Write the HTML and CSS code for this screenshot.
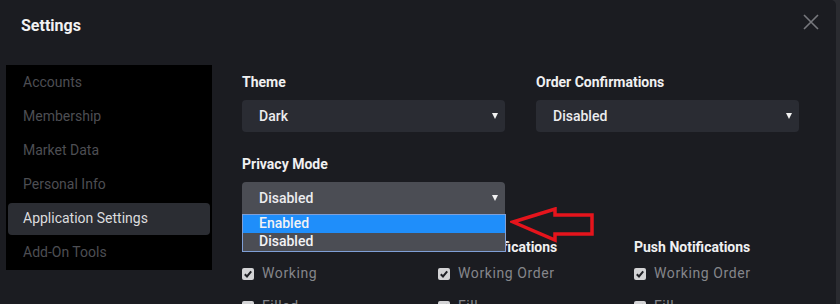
FILE: index.html
```html
<!DOCTYPE html>
<html>
<head>
<meta charset="utf-8">
<link rel="stylesheet" href="styles.css">
</head>
<body>
<div class="modal">
  <div class="header">
    <h1 class="title">Settings</h1>
    <svg class="close" width="16" height="16" viewBox="0 0 16 16"><path d="M1 1L15 15M15 1L1 15" stroke="#77787d" stroke-width="1.6" fill="none"/></svg>
  </div>
  <div class="body">
    <nav class="sidebar">
      <div class="nav-item">Accounts</div>
      <div class="nav-item">Membership</div>
      <div class="nav-item">Market Data</div>
      <div class="nav-item">Personal Info</div>
      <div class="nav-item active">Application Settings</div>
      <div class="nav-item">Add-On Tools</div>
    </nav>
    <main class="content">
      <div class="row">
        <div class="field">
          <div class="label">Theme</div>
          <div class="select"><span>Dark</span><i class="caret"></i></div>
        </div>
        <div class="field">
          <div class="label">Order Confirmations</div>
          <div class="select"><span>Disabled</span><i class="caret"></i></div>
        </div>
      </div>
      <div class="row">
        <div class="field privacy">
          <div class="label">Privacy Mode</div>
          <div class="select focused"><span>Disabled</span><i class="caret"></i></div>
          <div class="dropdown">
            <div class="option selected">Enabled</div>
            <div class="option">Disabled</div>
          </div>
          <svg class="arrow" width="90" height="40" viewBox="0 0 90 40"><path d="M3 15 L45 2 L45 8 L82 8 L82 27 L45 27 L45 33 Z" fill="none" stroke="#e5141c" stroke-width="3.5" stroke-linejoin="miter"/></svg>
        </div>
      </div>
      <div class="notif">
        <div class="col">
          <div class="label">Sound Notifications</div>
          <div class="check"><svg class="box" width="12" height="12" viewBox="0 0 12 12"><rect width="12" height="12" rx="2" fill="#d3d3d5"/><path d="M2.8 6.2L5 8.5L9.2 3.4" stroke="#1f2025" stroke-width="2" fill="none"/></svg><span>Working</span></div>
          <div class="check"><svg class="box" width="12" height="12" viewBox="0 0 12 12"><rect width="12" height="12" rx="2" fill="#d3d3d5"/><path d="M2.8 6.2L5 8.5L9.2 3.4" stroke="#1f2025" stroke-width="2" fill="none"/></svg><span>Filled</span></div>
        </div>
        <div class="col">
          <div class="label">Email Notifications</div>
          <div class="check"><svg class="box" width="12" height="12" viewBox="0 0 12 12"><rect width="12" height="12" rx="2" fill="#d3d3d5"/><path d="M2.8 6.2L5 8.5L9.2 3.4" stroke="#1f2025" stroke-width="2" fill="none"/></svg><span>Working Order</span></div>
          <div class="check"><svg class="box" width="12" height="12" viewBox="0 0 12 12"><rect width="12" height="12" rx="2" fill="#d3d3d5"/><path d="M2.8 6.2L5 8.5L9.2 3.4" stroke="#1f2025" stroke-width="2" fill="none"/></svg><span>Fill</span></div>
        </div>
        <div class="col">
          <div class="label">Push Notifications</div>
          <div class="check"><svg class="box" width="12" height="12" viewBox="0 0 12 12"><rect width="12" height="12" rx="2" fill="#d3d3d5"/><path d="M2.8 6.2L5 8.5L9.2 3.4" stroke="#1f2025" stroke-width="2" fill="none"/></svg><span>Working Order</span></div>
          <div class="check"><svg class="box" width="12" height="12" viewBox="0 0 12 12"><rect width="12" height="12" rx="2" fill="#d3d3d5"/><path d="M2.8 6.2L5 8.5L9.2 3.4" stroke="#1f2025" stroke-width="2" fill="none"/></svg><span>Fill</span></div>
        </div>
      </div>
    </main>
  </div>
</div>
</body>
</html>
```
FILE: styles.css
```css
* { box-sizing: border-box; }
html, body { margin: 0; padding: 0; }
body {
  background: #2a2b30;
  font-family: Roboto, "Liberation Sans", sans-serif;
  width: 840px;
  height: 304px;
  overflow: hidden;
}
.modal {
  width: 836px;
  height: 304px;
  background: #1b1c21;
  border-top-right-radius: 5px;
  overflow: hidden;
}
.header {
  height: 65px;
  display: flex;
  justify-content: space-between;
  align-items: flex-start;
  padding: 14px 17px 0 21px;
}
.title {
  margin: 2px 0 0;
  font-size: 16px;
  line-height: 20px;
  font-weight: 700;
  color: #f2f2f3;
}
.close { margin-top: 0; }
.body {
  display: flex;
  align-items: flex-start;
}
.sidebar {
  width: 206px;
  margin-left: 6px;
  background: #000;
  display: flex;
  flex-direction: column;
  padding-bottom: 1px;
}
.nav-item {
  height: 34px;
  line-height: 34px;
  padding-left: 17px;
  font-size: 14px;
  color: #4d4e53;
}
.nav-item.active {
  margin: 2px 2px 0;
  height: 32px;
  line-height: 30px;
  padding-left: 15px;
  background: #2b2d33;
  border-radius: 4px;
  color: #dcdcde;
}
.content {
  margin-left: 30px;
  padding-top: 8px;
  display: flex;
  flex-direction: column;
}
.row {
  display: flex;
  gap: 31px;
  margin-bottom: 23px;
}
.field {
  width: 263px;
  position: relative;
}
.label {
  font-size: 14px;
  font-weight: 700;
  line-height: 18px;
  color: #f0f0f1;
  margin-bottom: 9px;
  white-space: nowrap;
}
.select {
  height: 32px;
  background: #2a2c33;
  border-radius: 4px;
  display: flex;
  align-items: center;
  justify-content: space-between;
  padding: 0 7px 0 17px;
  font-size: 14px;
  font-weight: 500;
  color: #ececee;
}
.select.focused {
  background: #4b4d54;
  border-radius: 4px 4px 0 0;
}
.caret {
  width: 0;
  height: 0;
  border-left: 3px solid transparent;
  border-right: 3px solid transparent;
  border-top: 6px solid #f2f2f2;
}
.dropdown {
  position: absolute;
  left: 0;
  top: 59px;
  width: 264px;
  height: 38px;
  border: 1px solid #7f9fd6;
  background: #4b4d54;
  z-index: 5;
}
.option {
  height: 18px;
  line-height: 17px;
  padding-left: 16px;
  font-size: 14px;
  font-weight: 500;
  color: #f2f2f4;
}
.option.selected { background: #1f8efa; }
.arrow {
  position: absolute;
  left: 268px;
  top: 52px;
  z-index: 6;
}
.notif {
  display: grid;
  grid-template-columns: 196px 196px 196px;
  margin-top: 1px;
}
.col .label { margin-bottom: 8px; }
.check {
  display: flex;
  align-items: center;
  height: 17px;
  margin-bottom: 16px;
  font-size: 14px;
  color: #85868b;
  letter-spacing: 0.6px;
}
.box { margin-right: 8px; flex: none; margin-top: 2px; }
```
